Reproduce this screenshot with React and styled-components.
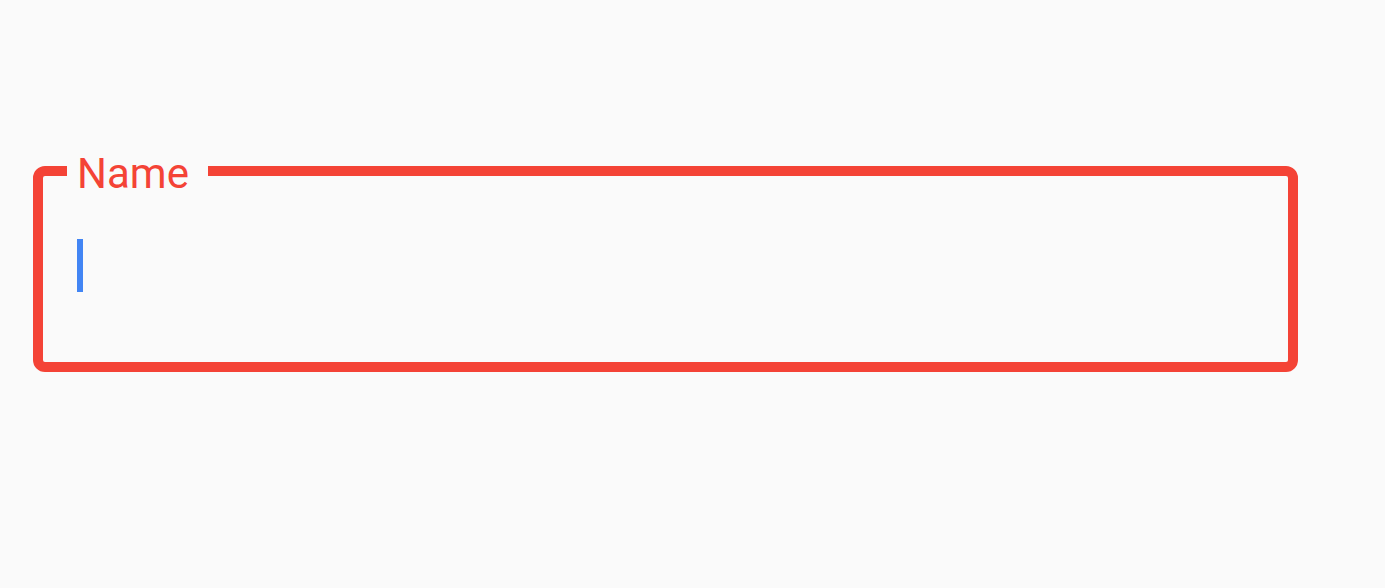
import React from 'react';
import styled, { createGlobalStyle } from 'styled-components';

const GlobalStyle = createGlobalStyle`
  html, body {
    margin: 0;
    padding: 0;
    background: #fafafa;
  }
  body {
    font-family: Roboto, 'Noto Sans', sans-serif;
  }
`;

const Page = styled.div`
  min-height: 588px;
  box-sizing: border-box;
  padding: 143px 0 0 33px;
  background: #fafafa;
`;

const Field = styled.fieldset`
  box-sizing: border-box;
  width: 1265px;
  margin: 0;
  padding: 0 24px;
  border: 10px solid ${(p) => p.color};
  border-radius: 12px;
  min-width: 0;
`;

const Label = styled.legend`
  padding: 6px 19px 0 10px;
  font-family: Roboto, sans-serif;
  font-size: 42px;
  line-height: 49px;
  color: ${(p) => p.color};
`;

const InputArea = styled.div`
  height: 164px;
  display: flex;
  align-items: flex-start;
  padding: 41px 10px 0;
  box-sizing: border-box;
`;

const Caret = styled.div`
  width: 6px;
  height: 53px;
  background: #4285f4;
`;

export default function App() {
  const errorColor = '#f44336';
  return (
    <>
      <GlobalStyle />
      <Page>
        <Field color={errorColor}>
          <Label color={errorColor}>Name</Label>
          <InputArea>
            <Caret />
          </InputArea>
        </Field>
      </Page>
    </>
  );
}
